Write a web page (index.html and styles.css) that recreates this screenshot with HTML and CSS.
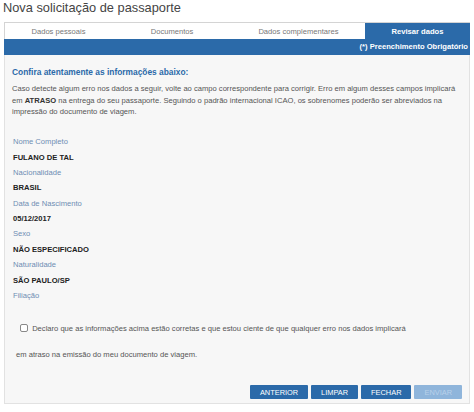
FILE: index.html
```html
<!DOCTYPE html>
<html lang="pt-BR">
<head>
  <meta charset="UTF-8" />
  <meta name="viewport" content="width=device-width, initial-scale=1.0" />
  <title>Nova solicitação de passaporte</title>
  <link rel="stylesheet" href="styles.css">
</head>
<body>
  <h1 class="titulo">Nova solicitação de passaporte</h1>

  <div class="wizard">
    <div class="abas">
      <div class="aba">Dados pessoais</div>
      <div class="aba">Documentos</div>
      <div class="aba">Dados complementares</div>
      <div class="aba ativa">Revisar dados</div>
    </div>
    <div class="barra">(*) Preenchimento Obrigatório</div>
  </div>

  <div class="painel">
    <h3>Confira atentamente as informações abaixo:</h3>
    <p class="aviso">Caso detecte algum erro nos dados a seguir, volte ao campo correspondente para corrigir. Erro em algum desses campos implicará em <b>ATRASO</b> na entrega do seu passaporte. Seguindo o padrão internacional ICAO, os sobrenomes poderão ser abreviados na impressão do documento de viagem.</p>

    <dl class="dados">
      <dt>Nome Completo</dt>
      <dd>FULANO DE TAL</dd>
      <dt>Nacionalidade</dt>
      <dd>BRASIL</dd>
      <dt>Data de Nascimento</dt>
      <dd>05/12/2017</dd>
      <dt>Sexo</dt>
      <dd>NÃO ESPECIFICADO</dd>
      <dt>Naturalidade</dt>
      <dd>SÃO PAULO/SP</dd>
      <dt>Filiação</dt>
    </dl>

    <p class="declaro">
      <input type="checkbox" id="declaro" />
      <label for="declaro">Declaro que as informações acima estão corretas e que estou ciente de que qualquer erro nos dados implicará<br>em atraso na emissão do meu documento de viagem.</label>
    </p>

    <div class="botoes">
      <button>ANTERIOR</button>
      <button>LIMPAR</button>
      <button>FECHAR</button>
      <button disabled>ENVIAR</button>
    </div>
  </div>
</body>
</html>
```

FILE: styles.css
```css
body { margin: 0; font-family: "Liberation Sans", Arial, sans-serif; font-size: 7.6px; color: #555; background: #fff; }
.titulo { margin: 0; padding: 0 0 0 3px; height: 22px; line-height: 15px; font-size: 12.8px; font-weight: normal; color: #444; }

.wizard { margin: 0 4px; border-top: 1px solid #d4d4d4; }
.abas { display: grid; grid-template-columns: 107px 120px 133px 1fr; height: 16px; border-left: 1px solid #d4d4d4; }
.aba { display: flex; align-items: center; justify-content: center; color: #777; background: #fff; }
.aba.ativa { background: #2b6aa9; color: #fff; font-weight: bold; }
.barra { height: 16px; line-height: 16px; background: #2b6aa9; color: #fff; font-weight: bold; text-align: right; padding-right: 2px; }

.painel { margin: 0 4px; height: 349px; box-sizing: border-box; padding: 12px 7px 0 7px; background: #f7f7f7; border: 1px solid #e2e2e2; border-top: none; display: flex; flex-direction: column; }
.painel h3 { margin: 0; font-size: 8.4px; line-height: 10px; color: #2b6aa9; }
.aviso { margin: 6px 0 0; line-height: 11.7px; color: #555; }
.aviso b { color: #333; }

.dados { margin: 16px 0 0; padding-left: 1px; }
.dados dt, .dados dd { margin: 0; height: 15.4px; line-height: 15.4px; }
.dados dt { color: #6e8db3; }
.dados dd { color: #222; font-weight: bold; }

.declaro { margin: 13px 0 0; padding-left: 4px; line-height: 26px; color: #555; }
.declaro input { -webkit-appearance: none; appearance: none; width: 8px; height: 8px; margin: 0 2px 0 4px; vertical-align: -1px; border: 1px solid #888; border-radius: 2px; background: #fff; }

.botoes { margin-top: auto; margin-bottom: 4px; display: flex; justify-content: flex-end; gap: 3px; }
.botoes button { height: 14px; padding: 0 10px; border: none; border-radius: 1px; background: #2b6aa9; color: #fff; font-family: inherit; font-size: 7.4px; cursor: pointer; }
.botoes button:disabled { background: #8fb5db; color: #b9d1ea; cursor: default; }
```
